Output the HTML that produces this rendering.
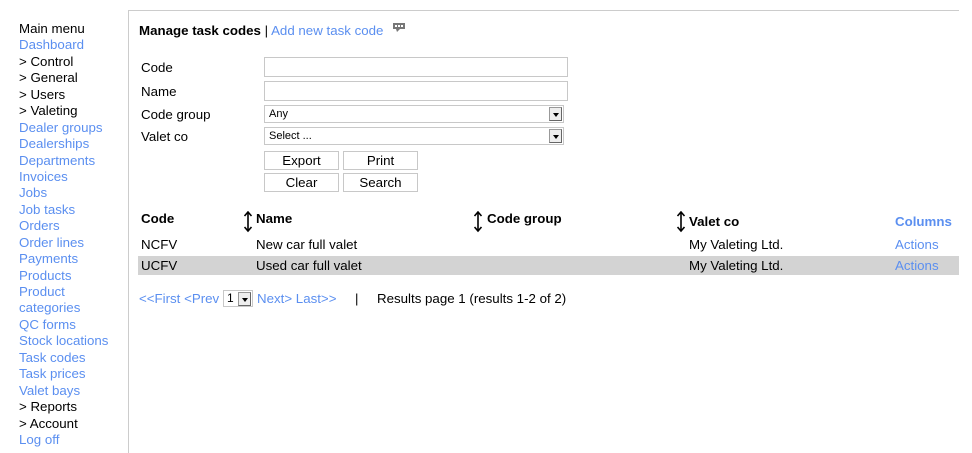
<!DOCTYPE html>
<html><head><meta charset="utf-8"><style>
*{margin:0;padding:0;box-sizing:border-box}
body{width:972px;height:453px;background:#fff;font-family:"Liberation Sans",Arial,sans-serif;font-size:13.3px;color:#000;position:relative;overflow:hidden}
.a{position:absolute;white-space:nowrap;line-height:16px}
.l{color:#5b8ff0}
.nav div{height:16.44px;line-height:16.44px}
.in{position:absolute;border:1px solid #c8c8c8;background:#fff}
.sel{position:absolute;border:1px solid #c8c8c8;background:#fff;font-size:11px;line-height:16px;padding-left:4px}
.sel i{position:absolute;right:1px;top:1px;width:13px;height:14px;background:#eee;border:1px solid #999;border-right-color:#666;border-bottom-color:#666}
.sel i:after{content:"";position:absolute;left:3px;top:5px;border-left:3px solid transparent;border-right:3px solid transparent;border-top:4px solid #000}
.btn{position:absolute;border:1px solid #c8c8c8;background:#fff;text-align:center;line-height:17px;width:75px;height:19px}
b{font-weight:bold}
</style></head><body>
<div class="a nav" style="left:19px;top:21px">
<div>Main menu</div><div class="l">Dashboard</div><div>&gt; Control</div><div>&gt; General</div><div>&gt; Users</div><div>&gt; Valeting</div>
<div class="l">Dealer groups</div><div class="l">Dealerships</div><div class="l">Departments</div><div class="l">Invoices</div><div class="l">Jobs</div><div class="l">Job tasks</div><div class="l">Orders</div><div class="l">Order lines</div><div class="l">Payments</div><div class="l">Products</div><div class="l">Product</div><div class="l">categories</div><div class="l">QC forms</div><div class="l">Stock locations</div><div class="l">Task codes</div><div class="l">Task prices</div><div class="l">Valet bays</div><div>&gt; Reports</div><div>&gt; Account</div><div class="l">Log off</div>
</div>
<div style="position:absolute;left:128px;top:10px;width:1px;height:443px;background:#ccc"></div>
<div style="position:absolute;left:128px;top:10px;width:831px;height:1px;background:#ccc"></div>

<div class="a" style="left:139px;top:23px"><b>Manage task codes</b> | <span class="l">Add new task code</span></div>
<svg style="position:absolute;left:393px;top:23px" width="12" height="10"><rect x="0" y="0" width="12" height="6" fill="#777"/><polygon points="3,6 7,6 4,9" fill="#777"/><rect x="2" y="2" width="2" height="2" fill="#fff"/><rect x="5" y="2" width="2" height="2" fill="#fff"/><rect x="8" y="2" width="2" height="2" fill="#fff"/></svg>

<div class="a" style="left:141px;top:60px">Code</div>
<div class="a" style="left:141px;top:84px">Name</div>
<div class="a" style="left:141px;top:107px">Code group</div>
<div class="a" style="left:141px;top:129px">Valet co</div>
<div class="in" style="left:264px;top:57px;width:304px;height:20px"></div>
<div class="in" style="left:264px;top:81px;width:304px;height:20px"></div>
<div class="sel" style="left:264px;top:105px;width:300px;height:18px">Any<i></i></div>
<div class="sel" style="left:264px;top:127px;width:300px;height:18px">Select ...<i></i></div>
<div class="btn" style="left:264px;top:151px">Export</div>
<div class="btn" style="left:343px;top:151px">Print</div>
<div class="btn" style="left:264px;top:173px">Clear</div>
<div class="btn" style="left:343px;top:173px">Search</div>

<svg width="0" height="0" style="position:absolute"><defs><g id="ar"><path d="M4 1V20" stroke="#000" stroke-width="1.6"/><path d="M0.5 5L4 1L7.5 5M0.5 16L4 20L7.5 16" stroke="#000" stroke-width="1.6" fill="none"/></g></defs></svg>
<svg style="position:absolute;left:244px;top:211px" width="9" height="22"><use href="#ar"/></svg>
<svg style="position:absolute;left:474px;top:211px" width="9" height="22"><use href="#ar"/></svg>
<svg style="position:absolute;left:677px;top:211px" width="9" height="22"><use href="#ar"/></svg>
<div class="a" style="left:141px;top:211px"><b>Code</b></div>
<div class="a" style="left:256px;top:211px"><b>Name</b></div>
<div class="a" style="left:487px;top:211px"><b>Code group</b></div>
<div class="a" style="left:689px;top:214px"><b>Valet co</b></div>
<div class="a l" style="left:895px;top:214px"><b>Columns</b></div>

<div class="a" style="left:141px;top:237px">NCFV</div>
<div class="a" style="left:256px;top:237px">New car full valet</div>
<div class="a" style="left:689px;top:237px">My Valeting Ltd.</div>
<div class="a l" style="left:895px;top:237px">Actions</div>
<div style="position:absolute;left:138px;top:256px;width:821px;height:19px;background:#d3d3d3"></div>
<div class="a" style="left:141px;top:258px">UCFV</div>
<div class="a" style="left:256px;top:258px">Used car full valet</div>
<div class="a" style="left:689px;top:258px">My Valeting Ltd.</div>
<div class="a l" style="left:895px;top:258px">Actions</div>

<div class="a l" style="left:139px;top:291px">&lt;&lt;First &lt;Prev</div>
<div class="sel" style="left:223px;top:290px;width:30px;height:17px;font-size:12px;line-height:15px;padding-left:3px">1<i></i></div>
<div class="a l" style="left:257px;top:291px">Next&gt; Last&gt;&gt;</div>
<div class="a" style="left:355px;top:291px">|</div>
<div class="a" style="left:377px;top:291px">Results page 1 (results 1-2 of 2)</div>
</body></html>
